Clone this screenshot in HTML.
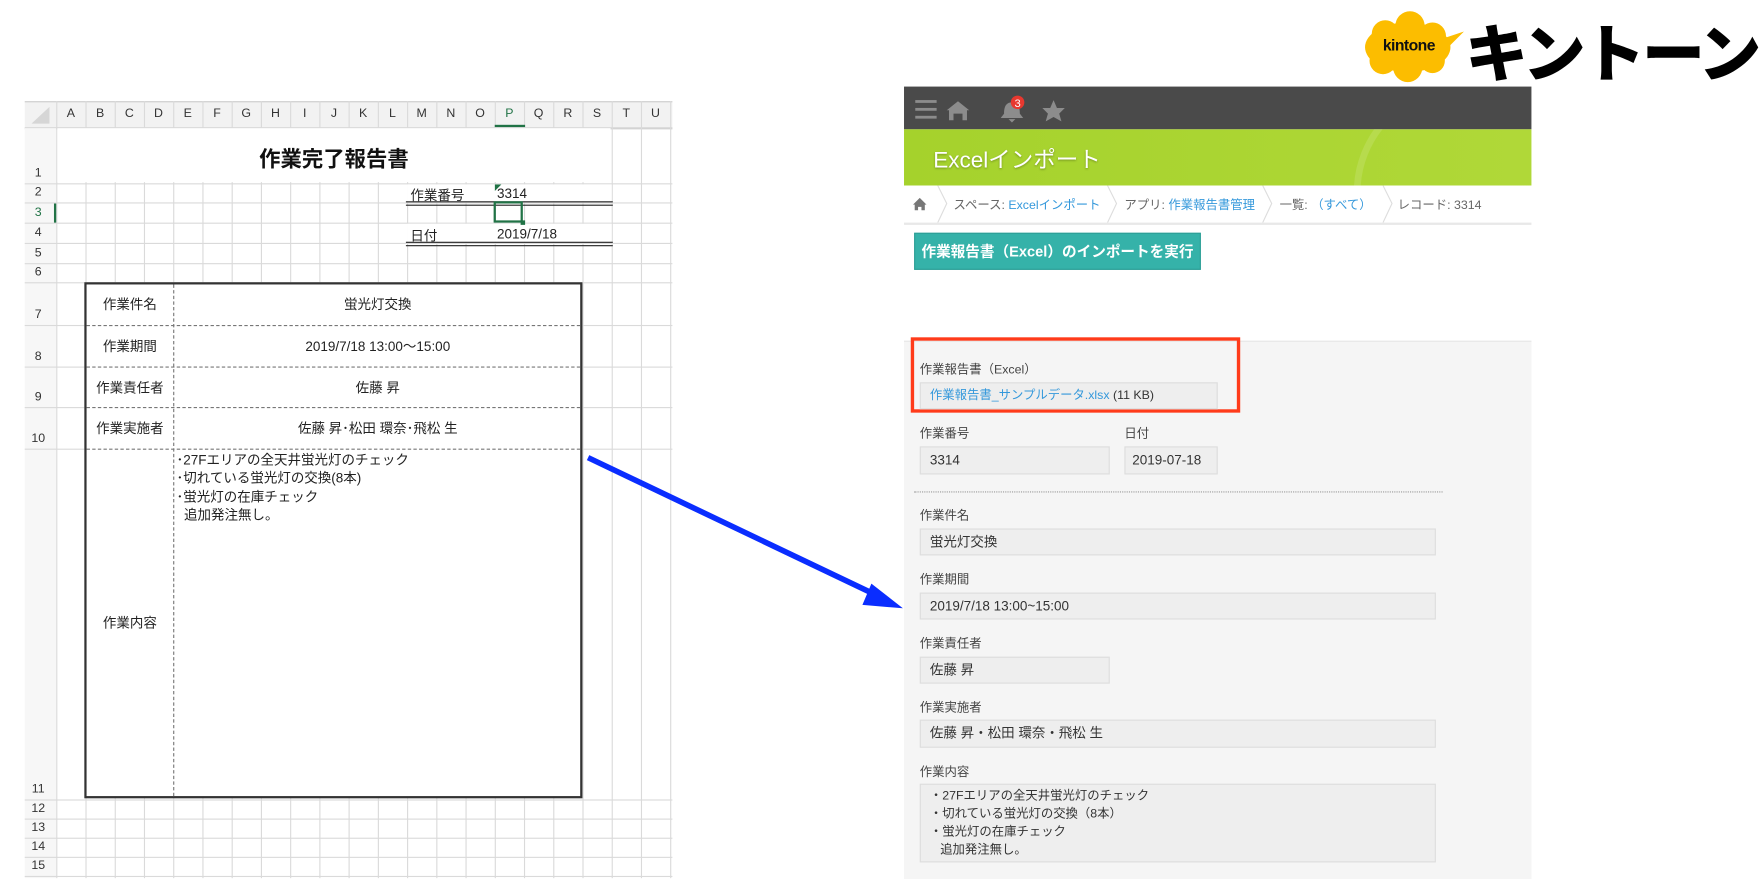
<!DOCTYPE html>
<html><head><meta charset="utf-8"><style>
html,body{margin:0;padding:0;width:1763px;height:878px;overflow:hidden;background:#fff}
#w{position:absolute;left:0;top:0;width:1568px;height:781px;transform:scale(1.1244);transform-origin:0 0;font-family:"Liberation Sans","Noto Sans CJK JP",sans-serif;color:#222}
.a{position:absolute;white-space:nowrap}
.hl{position:absolute;height:1px;background:#dadada}
.vl{position:absolute;width:1px;background:#dadada}
.lab{position:absolute;font-size:11px;color:#444}
.fld{position:absolute;background:#eeeeee;border:1px solid #dddddd;box-sizing:border-box;font-size:12px;color:#333;padding-left:8px;line-height:22px}
.bc{position:absolute;top:174px;font-size:11px;color:#666}
.bc b{font-weight:normal;color:#3498db}
.sep{position:absolute;top:165px;width:12px;height:33px}
</style></head><body><div id="w">

<div class="a" style="left:22px;top:90px;width:576px;height:23px;background:#f2f2f2;border-top:1px solid #ccc;border-bottom:1px solid #ccc"></div>
<div class="a" style="left:22px;top:113px;width:28px;height:668px;background:#f7f7f7"></div>
<svg class="a" style="left:26px;top:93px" width="20" height="18"><polygon points="18,2 18,17 2,17" fill="#d6d6d6"/></svg>
<div id="grid"></div>
<script>
var g='';var cols="ABCDEFGHIJKLMNOPQRSTU";
for(var k=0;k<21;k++){var x=50+26*k;g+='<div class="vl" style="left:'+x+'px;top:90px;height:691px"></div>';
g+='<div class="a" style="left:'+x+'px;top:95px;width:26px;text-align:center;font-size:11px;color:'+(k==15?'#217346':'#333')+'">'+cols[k]+'</div>';}
g+='<div class="vl" style="left:596px;top:90px;height:691px"></div>';
var rows=[113,163,180,198,216,234,251,289,326,362,399,711,728,745,762,779];
for(var i=0;i<rows.length;i++){g+='<div class="hl" style="left:22px;top:'+rows[i]+'px;width:576px"></div>';
if(i<15){var t=rows[i+1]-15;g+='<div class="a" style="left:22px;top:'+t+'px;width:24px;text-align:center;font-size:11px;color:'+(i==2?'#217346':'#333')+'">'+(i+1)+'</div>';}}
document.getElementById('grid').innerHTML=g;
</script>
<div class="a" style="left:440px;top:111px;width:27px;height:2px;background:#217346"></div>
<div class="a" style="left:48px;top:181px;width:2px;height:17px;background:#217346"></div>
<div class="a" style="left:51px;top:114px;width:492px;height:48px;background:#fff"></div>
<div class="a" style="left:51px;top:127px;width:492px;text-align:center;font-size:19px;font-weight:bold;color:#111">作業完了報告書</div>
<div class="a" style="left:362px;top:164px;width:182px;height:15px;background:#fff"></div>
<div class="a" style="left:362px;top:199px;width:182px;height:16px;background:#fff"></div>
<div class="a" style="left:365px;top:165px;font-size:12px">作業番号</div>
<div class="a" style="left:442px;top:165px;font-size:12px">3314</div>
<svg class="a" style="left:440px;top:164px" width="6" height="6"><polygon points="0,0 6,0 0,6" fill="#217346"/></svg>
<div class="a" style="left:361px;top:179px;width:184px;height:1px;border-top:1px solid #222;border-bottom:1px solid #222;padding-top:1px"></div>
<div class="a" style="left:365px;top:201px;font-size:12px">日付</div>
<div class="a" style="left:442px;top:201px;font-size:12px">2019/7/18</div>
<div class="a" style="left:361px;top:215px;width:184px;height:1px;border-top:1px solid #222;border-bottom:1px solid #222;padding-top:1px"></div>
<div class="a" style="left:439px;top:179px;width:26px;height:19px;border:2px solid #217346;box-sizing:border-box"></div>
<div class="a" style="left:463px;top:196px;width:4px;height:4px;background:#217346"></div>

<div class="a" style="left:75px;top:251px;width:443px;height:459px;border:2px solid #333;box-sizing:border-box;background:#fff"></div>
<div class="a" style="left:154px;top:253px;width:0;height:455px;border-left:1px dashed #777"></div>
<div class="a" style="left:77px;top:289px;width:439px;border-top:1px dashed #777"></div>
<div class="a" style="left:77px;top:326px;width:439px;border-top:1px dashed #777"></div>
<div class="a" style="left:77px;top:362px;width:439px;border-top:1px dashed #777"></div>
<div class="a" style="left:77px;top:399px;width:439px;border-top:1px dashed #777"></div>
<div class="a" style="left:77px;top:262px;width:77px;text-align:center;font-size:12px">作業件名</div>
<div class="a" style="left:77px;top:299px;width:77px;text-align:center;font-size:12px">作業期間</div>
<div class="a" style="left:77px;top:336px;width:77px;text-align:center;font-size:12px">作業責任者</div>
<div class="a" style="left:77px;top:372px;width:77px;text-align:center;font-size:12px">作業実施者</div>
<div class="a" style="left:77px;top:545px;width:77px;text-align:center;font-size:12px">作業内容</div>
<div class="a" style="left:155px;top:262px;width:362px;text-align:center;font-size:12px">蛍光灯交換</div>
<div class="a" style="left:155px;top:299px;width:362px;text-align:center;font-size:12px">2019/7/18 13:00～15:00</div>
<div class="a" style="left:155px;top:336px;width:362px;text-align:center;font-size:12px">佐藤 昇</div>
<div class="a" style="left:155px;top:372px;width:362px;text-align:center;font-size:12px">佐藤 昇･松田 環奈･飛松 生</div>
<div class="a" style="left:157px;top:401px;font-size:12px;line-height:16.3px">･27Fエリアの全天井蛍光灯のチェック<br>･切れている蛍光灯の交換(8本)<br>･蛍光灯の在庫チェック<br>&nbsp;&nbsp;追加発注無し。</div>

<svg class="a" style="left:515px;top:400px" width="295" height="150"><line x1="8" y1="7" x2="268" y2="131" stroke="#0a2dff" stroke-width="5"/><polygon points="288,141 260,119 252,138" fill="#0a2dff"/></svg>

<svg class="a" style="left:1210px;top:8px" width="100" height="68"><g fill="#fcbd00"><ellipse cx="42" cy="34" rx="38" ry="22"/><circle cx="22" cy="22" r="12"/><circle cx="44" cy="15" r="13"/><circle cx="64" cy="24" r="12"/><circle cx="20" cy="46" r="12"/><circle cx="42" cy="52" r="13"/><circle cx="64" cy="46" r="11"/><polygon points="74,26 92,20 76,36"/></g></svg>
<div class="a" style="left:1214px;top:32px;width:78px;text-align:center;font-size:14px;font-weight:bold;color:#111;letter-spacing:-0.5px">kintone</div>
<div class="a" style="left:1303px;top:4px;font-size:56px;font-weight:900;color:#000;letter-spacing:-3px;font-family:'Noto Sans CJK JP',sans-serif">キントーン</div>

<div class="a" style="left:804px;top:77px;width:558px;height:38px;background:#4a4a4a"></div>
<svg class="a" style="left:812px;top:84px" width="140" height="28">
<g fill="#8c8c8c"><rect x="2" y="5" width="19" height="2.5"/><rect x="2" y="12" width="19" height="2.5"/><rect x="2" y="19" width="19" height="2.5"/>
<path d="M40 6 L50 14 L48 14 L48 23 L44 23 L44 17 L36 17 L36 23 L32 23 L32 14 L30 14 Z"/>
<path d="M88 7 C82 7 81 12 81 17 L78 21 L98 21 L95 17 C95 12 94 7 88 7 Z M85 22 L91 22 L88 25 Z"/>
<path d="M125 5 L128 12 L135 12 L130 17 L132 24 L125 20 L118 24 L120 17 L115 12 L122 12 Z"/></g>
<circle cx="93" cy="7" r="6" fill="#e8382f"/><text x="93" y="11" font-size="10" fill="#fff" text-anchor="middle" font-family="Liberation Sans">3</text></svg>
<div class="a" style="left:804px;top:115px;width:558px;height:50px;background:linear-gradient(90deg,#a5d22c,#b0d838);overflow:hidden"><div class="a" style="left:400px;top:-40px;width:180px;height:180px;border-radius:50%;border:6px solid rgba(255,255,255,0.12)"></div></div>
<div class="a" style="left:830px;top:126px;font-size:20px;color:#fff;text-shadow:0 1px 2px rgba(0,0,0,0.3)">Excelインポート</div>
<div class="a" style="left:804px;top:165px;width:558px;height:33px;background:#fff;border-bottom:2px solid #e8e8e8"></div>
<svg class="a" style="left:811px;top:175px" width="14" height="13"><path d="M7 1 L13 7 L11.5 7 L11.5 12 L8.5 12 L8.5 9 L5.5 9 L5.5 12 L2.5 12 L2.5 7 L1 7 Z" fill="#777"/></svg>
<svg class="sep" style="left:832px"><polyline points="2,0 10,16 2,33" fill="none" stroke="#ddd"/></svg>
<svg class="sep" style="left:983px"><polyline points="2,0 10,16 2,33" fill="none" stroke="#ddd"/></svg>
<svg class="sep" style="left:1121px"><polyline points="2,0 10,16 2,33" fill="none" stroke="#ddd"/></svg>
<svg class="sep" style="left:1228px"><polyline points="2,0 10,16 2,33" fill="none" stroke="#ddd"/></svg>
<div class="bc" style="left:848px">スペース: <b>Excelインポート</b></div>
<div class="bc" style="left:1000px">アプリ: <b>作業報告書管理</b></div>
<div class="bc" style="left:1138px">一覧: <b>（すべて）</b></div>
<div class="bc" style="left:1243px">レコード: 3314</div>
<div class="a" style="left:813px;top:207px;width:255px;height:33px;background:#35b2a9;border:1px solid #2e9f97;box-sizing:border-box;color:#fff;font-size:13px;font-weight:bold;line-height:31px;text-align:center">作業報告書（Excel）のインポートを実行</div>

<div class="a" style="left:804px;top:303px;width:558px;height:478px;background:#f5f5f5;border-top:1px solid #e6e6e6"></div>
<div class="a" style="left:810px;top:300px;width:293px;height:67px;border:3px solid #ff3b1a;box-sizing:border-box"></div>
<div class="lab" style="left:818px;top:320px">作業報告書（Excel）</div>
<div class="fld" style="left:818px;top:340px;width:265px;height:24px;font-size:11px"><span style="color:#3498db">作業報告書_サンプルデータ.xlsx</span> (11 KB)</div>
<div class="lab" style="left:818px;top:377px">作業番号</div>
<div class="fld" style="left:818px;top:397px;width:169px;height:25px">3314</div>
<div class="lab" style="left:1000px;top:377px">日付</div>
<div class="fld" style="left:1000px;top:397px;width:83px;height:25px;padding-left:6px">2019-07-18</div>
<div class="a" style="left:813px;top:437px;width:470px;border-top:1px dotted #999"></div>
<div class="lab" style="left:818px;top:450px">作業件名</div>
<div class="fld" style="left:818px;top:470px;width:459px;height:24px">蛍光灯交換</div>
<div class="lab" style="left:818px;top:507px">作業期間</div>
<div class="fld" style="left:818px;top:527px;width:459px;height:24px">2019/7/18 13:00~15:00</div>
<div class="lab" style="left:818px;top:564px">作業責任者</div>
<div class="fld" style="left:818px;top:584px;width:169px;height:24px">佐藤 昇</div>
<div class="lab" style="left:818px;top:621px">作業実施者</div>
<div class="fld" style="left:818px;top:640px;width:459px;height:25px">佐藤 昇・松田 環奈・飛松 生</div>
<div class="lab" style="left:818px;top:678px">作業内容</div>
<div class="fld" style="left:818px;top:697px;width:459px;height:70px;font-size:11px;line-height:16px;padding-top:2px">・27Fエリアの全天井蛍光灯のチェック<br>・切れている蛍光灯の交換（8本）<br>・蛍光灯の在庫チェック<br>&nbsp;&nbsp;&nbsp;追加発注無し。</div>

</div></body></html>
